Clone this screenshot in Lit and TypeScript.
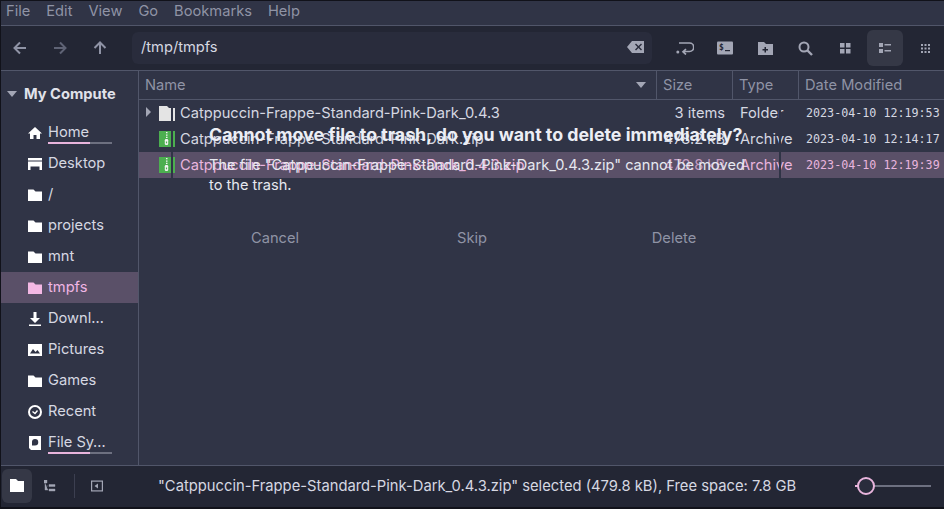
import { LitElement, html, css, svg } from "lit";
import { customElement } from "lit/decorators.js";

const folder = svg`<path d="M1 2.500h5.500l2 2H15v9.500H1z" fill="currentColor"/>`;
const icons: Record<string, unknown> = {
  home: svg`<path d="M8 2 1 8.500H3V14h3.500v-4h3v4H13V8.500h2z" fill="currentColor"/>`,
  desktop: svg`<path d="M1 2h14v2.500H1zM1 5.500h14V14h-2.500v-3.500h-9V14H1z" fill="currentColor"/>`,
  folder,
  download: svg`<path d="M6.500 1h3v6H13L8 12 3 7h3.500zM2 13.500h12V15H2z" fill="currentColor"/>`,
  pictures: svg`<path fill-rule="evenodd" d="M1 2h14v12H1zM3 11.500h10L10.500 8 8.500 10 6 7z" fill="currentColor"/>`,
  recent: svg`<circle cx="8" cy="8" r="6" fill="none" stroke="currentColor" stroke-width="2"/><path d="M5.500 7.500 8 9.500l2.500-3" fill="none" stroke="currentColor" stroke-width="1.400"/>`,
  fs: svg`<path fill-rule="evenodd" d="M2 1h12v14H4l-2-2zM8 4a3 3 0 0 0-3 3v3.500h3a3 3 0 0 0 0-6.500z" fill="currentColor"/>`,
};

const side = [
  ["home", "Home", "bar"],
  ["desktop", "Desktop", ""],
  ["folder", "/", ""],
  ["folder", "projects", ""],
  ["folder", "mnt", ""],
  ["folder", "tmpfs", "sel"],
  ["download", "Downl…", ""],
  ["pictures", "Pictures", ""],
  ["folder", "Games", ""],
  ["recent", "Recent", ""],
  ["fs", "File Sy…", "bar"],
];

const zip = html`<svg class="ic" width="16" height="16" viewBox="0 0 16 16"><rect y="0" width="16" height="16" fill="#4caf50"/><path d="M7 1h1.500v1.300H7zM7 3.400h1.500v1.300H7zM7 5.800h1.500v1.300H7z" fill="#f2f2f2"/><rect x="5.800" y="8" width="3.400" height="6" rx="1.200" fill="#f2f2f2"/><rect x="6.900" y="10.500" width="1.200" height="1.800" fill="#4caf50"/></svg>`;
const dir = html`<svg class="ic" width="16" height="16" viewBox="0 0 16 16"><path d="M0 1h8l2 2h6v13H0z" fill="#e4e4e4"/></svg>`;

const rows = [
  { folder: true, name: "Catppuccin-Frappe-Standard-Pink-Dark_0.4.3", size: "3 items", type: "Folder", date: "2023-04-10 12:19:53" },
  { folder: false, name: "Catppuccin-Frappe-Standard-Pink-Dark.zip", size: "478.2 kB", type: "Archive", date: "2023-04-10 12:14:17" },
  { folder: false, sel: true, name: "Catppuccin-Frappe-Standard-Pink-Dark_0.4.3.zip", size: "479.8 kB", type: "Archive", date: "2023-04-10 12:19:39" },
];

@customElement("app-root")
export class AppRoot extends LitElement {
  static styles = css`
    :host { display: block; width: 944px; height: 509px; overflow: hidden; background: #11121a; font-family: Inter, "Noto Sans", sans-serif; }
    .win { position: relative; margin: 1px 0 0 1px; width: 943px; height: 506px; display: flex; flex-direction: column; background: #303446; color: #d6d8e2; font-size: 14.670px; }
    .menu { flex: none; display: flex; gap: 16px; padding: 0 0 4px 5px; height: 20px; align-items: center; color: #8f93a5; border-bottom: 1px solid #51566a; }
    .tool { height: 44px; flex: none; display: flex; align-items: center; background: #232634; border-bottom: 1px solid #51566a; }
    .nav { width: 40px; height: 30px; display: flex; align-items: center; justify-content: center; color: #8f93a5; }
    .nav.dim { color: #5f6375; }
    .navs { display: flex; width: 131px; margin-left: -1px; flex: none; padding-right: 1px; }
    .path { width: 520px; height: 32px; background: #292c3c; border-radius: 6px; display: flex; align-items: center; justify-content: space-between; padding: 0 7px 2px 9px; box-sizing: border-box; }
    .tbtns { display: flex; margin-left: 15px; gap: 4px; }
    .tb { width: 36px; height: 36px; display: flex; align-items: center; justify-content: center; color: #a3a6b5; border-radius: 6px; }
    .tb.on { background: #353846; }
    .main { flex: 1; display: flex; min-height: 0; }
    .side { width: 137px; flex: none; border-right: 1px solid #51566a; }
    .sh { height: 31px; margin: 7px 0 8px; display: flex; align-items: center; font-weight: 700; color: #e0e2ea; padding-left: 6px; gap: 7px; }
    .tri { width: 0; height: 0; border-left: 5.500px solid transparent; border-right: 5.500px solid transparent; border-top: 6px solid #a3a6b5; }
    .si { height: 31px; display: flex; align-items: center; padding-left: 26px; gap: 5px; position: relative; }
    .si.sel { background: #5a5068; color: #f0b6e4; }
    .si svg { flex: none; }
    .si span { position: relative; top: -1px; }
    .bar::after { content: ""; position: absolute; left: 47px; top: 25px; width: 64px; height: 2px; background: linear-gradient(90deg, #e8b4dc 0 42px, #6d7080 42px); }
    .list { flex: 1; min-width: 0; display: flex; flex-direction: column; }
    .hdr { height: 28px; flex: none; display: grid; grid-template-columns: 518px 76px 66px 1fr; border-bottom: 1px solid #51566a; color: #8f93a5; align-items: stretch; }
    .hdr > div { display: flex; align-items: center; padding: 0 10px 0 6px; border-right: 1px solid #51566a; justify-content: space-between; }
    .hdr > div:last-child { border: 0; }
    .row { height: 26px; display: grid; grid-template-columns: 518px 76px 66px 1fr; align-items: center; }
    .row.sel { background: #5a5068; color: #e9b5de; }
    .row.sel .sz { color: #c49bc0; }
    .nm { display: flex; align-items: center; white-space: nowrap; overflow: hidden; padding-left: 20px; position: relative; }
    .ic { flex: none; margin-right: 5px; }
    .exp { position: absolute; left: 7px; top: 3px; width: 0; height: 0; border-top: 5px solid transparent; border-bottom: 5px solid transparent; border-left: 5.500px solid #a3a6b5; }
    .sz { text-align: right; padding-right: 8px; white-space: nowrap; }
    .ty { padding-left: 7px; white-space: nowrap; }
    .dt { padding-left: 7px; font-family: "DejaVu Sans Mono", monospace; font-size: 11.700px; white-space: nowrap; }
    .status { height: 42px; flex: none; background: #232634; border-top: 1px solid #51566a; display: flex; align-items: center; box-sizing: border-box; padding-bottom: 2px; }
    .sbtn { width: 30px; height: 30px; margin-left: 1px; display: flex; align-items: center; justify-content: center; color: #a3a6b5; flex: none; }
    .sbtn.on { height: 34px; background: #353846; color: #fff; border-radius: 6px; }
    .sbtn.tree { margin-left: 3px; }
    .sbtn.pane { margin-left: 0; }
    .vsep { width: 1px; height: 24px; background: #3c3f50; margin: 0 7px 0 9px; flex: none; }
    .stxt { margin-left: 46px; white-space: nowrap; flex: 1; font-size: 14.760px; }
    .slider { width: 76px; margin-right: 13px; height: 20px; position: relative; display: flex; align-items: center; }
    .track { height: 2px; width: 100%; background: #6d7080; }
    .fill { position: absolute; left: 0; width: 6px; height: 2px; background: #e8b4dc; }
    .knob { position: absolute; left: 2px; top: 1px; width: 14px; height: 14px; border: 2px solid #e8b4dc; border-radius: 50%; background: #292c3c; }
    .dlg { position: absolute; left: 170px; top: 100px; width: 610px; height: 162px; border: solid #303446; border-width: 0 2px; box-sizing: border-box; padding: 23px 36px 0; color: #e6e8f0; }
    .dt1 { font-weight: 700; font-size: 17.800px; line-height: 22px; color: #eceef5; white-space: nowrap; }
    .dt2 { margin-top: 9px; line-height: 20px; width: 545px; font-size: 14.600px; }
    .btns { position: absolute; left: 0; top: 128px; display: grid; grid-template-columns: 204px 190px 214px; text-align: center; color: #8f93a5; }
  `;

  render() {
    return html`<div class="win">
      <div class="menu"><span>File</span><span>Edit</span><span>View</span><span>Go</span><span>Bookmarks</span><span>Help</span></div>
      <div class="tool">
        <div class="navs">
          <div class="nav"><svg width="14" height="14" viewBox="0 0 14 14"><path d="M7 1.500 1.500 7 7 12.500M2 7h11" fill="none" stroke="currentColor" stroke-width="2"/></svg></div>
          <div class="nav dim"><svg width="14" height="14" viewBox="0 0 14 14"><path d="M7 1.500 12.500 7 7 12.500M12 7H1" fill="none" stroke="currentColor" stroke-width="2"/></svg></div>
          <div class="nav"><svg width="14" height="14" viewBox="0 0 14 14"><path d="M1.500 7 7 1.500 12.500 7M7 2v11" fill="none" stroke="currentColor" stroke-width="2"/></svg></div>
        </div>
        <div class="path"><span>/tmp/tmpfs</span>
          <svg width="18" height="14" viewBox="0 0 18 14"><path fill-rule="evenodd" d="M5 1h12v12H5L0 7zM8 4.500 10.500 7 8 9.500 9 10.500 11.500 8 14 10.500 15 9.500 12.500 7 15 4.500 14 3.500 11.500 6 9 3.500z" fill="#a3a6b5"/></svg>
        </div>
        <div class="tbtns">
          <div class="tb"><svg width="18" height="14" viewBox="0 0 18 14"><circle cx="1.800" cy="11" r="1.500" fill="currentColor"/><path d="M3 2h10.500a3.500 3.500 0 0 1 0 8.500H7M10 8 7 10.800l3 2.700" fill="none" stroke="currentColor" stroke-width="1.700"/></svg></div>
          <div class="tb"><svg width="16" height="14" viewBox="0 0 16 14"><rect width="16" height="13" y=".5" rx="1" fill="currentColor"/><text x="2" y="8.500" font-size="8" font-weight="700" font-family="DejaVu Sans Mono" fill="#232634">$</text><rect x="8" y="9" width="5" height="1.200" fill="#232634"/></svg></div>
          <div class="tb"><svg width="15" height="14" viewBox="0 0 15 14"><path fill-rule="evenodd" d="M0 1h6l2 2h7v11H0zM6.500 6v2h-2v1.500h2v2H8v-2h2V8H8V6z" fill="currentColor"/></svg></div>
          <div class="tb"><svg width="15" height="15" viewBox="0 0 15 15"><circle cx="6" cy="6" r="4.500" fill="none" stroke="currentColor" stroke-width="2"/><path d="M9.500 9.500 14 14" stroke="currentColor" stroke-width="2.400"/></svg></div>
          <div class="tb"><svg width="11" height="11" viewBox="0 0 11 11"><path d="M0 0h4.500v4.500H0zM6 0h4.500v4.500H6zM0 6h4.500v4.500H0zM6 6h4.500v4.500H6z" fill="currentColor"/></svg></div>
          <div class="tb on"><svg width="12" height="10" viewBox="0 0 12 10"><path d="M0 0h4v4H0zM5.500 1H12v1.500H5.500zM0 6h4v4H0zM5.500 7H12v1.500H5.500z" fill="currentColor"/></svg></div>
          <div class="tb"><svg width="9" height="9" viewBox="0 0 9 9"><path d="M0 0h2v2H0zM3.500 0h2v2h-2zM7 0h2v2H7zM0 3.500h2v2H0zM3.500 3.500h2v2h-2zM7 3.500h2v2H7zM0 7h2v2H0zM3.500 7h2v2h-2zM7 7h2v2H7z" fill="currentColor"/></svg></div>
        </div>
      </div>
      <div class="main">
        <div class="side">
          <div class="sh"><span class="tri"></span><span>My Compute</span></div>
          ${side.map(([ic, t, k]) => html`<div class="si ${k}"><svg width="16" height="16" viewBox="0 0 16 16" style="color:${k === "sel" ? "#f4b8e4" : "#fff"}">${icons[ic]}</svg><span>${t}</span></div>`)}
        </div>
        <div class="list">
          <div class="hdr"><div><span>Name</span><span class="tri"></span></div><div>Size</div><div>Type</div><div>Date Modified</div></div>
          ${rows.map((r) => html`<div class="row ${r.sel ? "sel" : ""}">
            <div class="nm">${r.folder ? html`<span class="exp"></span>${dir}` : zip}<span>${r.name}</span></div>
            <div class="sz">${r.size}</div>
            <div class="ty">${r.type}</div>
            <div class="dt">${r.date}</div>
          </div>`)}
        </div>
      </div>
      <div class="status">
        <div class="sbtn on"><svg width="16" height="15" viewBox="0 0 16 15"><path d="M1 1h6l2 2h6v11H1z" fill="currentColor"/></svg></div>
        <div class="sbtn tree"><svg width="12" height="12" viewBox="0 0 12 12"><path d="M0 0h3v3H0zM1 3v7h3M1 6h3M5 4.500h6v2H5zM5 9h6v2H5z" fill="currentColor" stroke="currentColor" stroke-width=".4"/></svg></div>
        <div class="vsep"></div>
        <div class="sbtn pane"><svg width="12" height="12" viewBox="0 0 12 12"><rect x=".6" y="1.100" width="10.800" height="9.800" fill="none" stroke="currentColor" stroke-width="1.200"/><path d="M7 3.500v5L3.500 6z" fill="currentColor"/></svg></div>
        <div class="stxt">"Catppuccin-Frappe-Standard-Pink-Dark_0.4.3.zip" selected (479.8 kB), Free space: 7.8 GB</div>
        <div class="slider"><div class="track"></div><div class="fill"></div><div class="knob"></div></div>
      </div>
      <div class="dlg">
        <div class="dt1">Cannot move file to trash, do you want to delete immediately?</div>
        <div class="dt2">The file "Catppuccin-Frappe-Standard-Pink-Dark_0.4.3.zip" cannot be moved to the trash.</div>
        <div class="btns"><span>Cancel</span><span>Skip</span><span>Delete</span></div>
      </div>
    </div>`;
  }
}
